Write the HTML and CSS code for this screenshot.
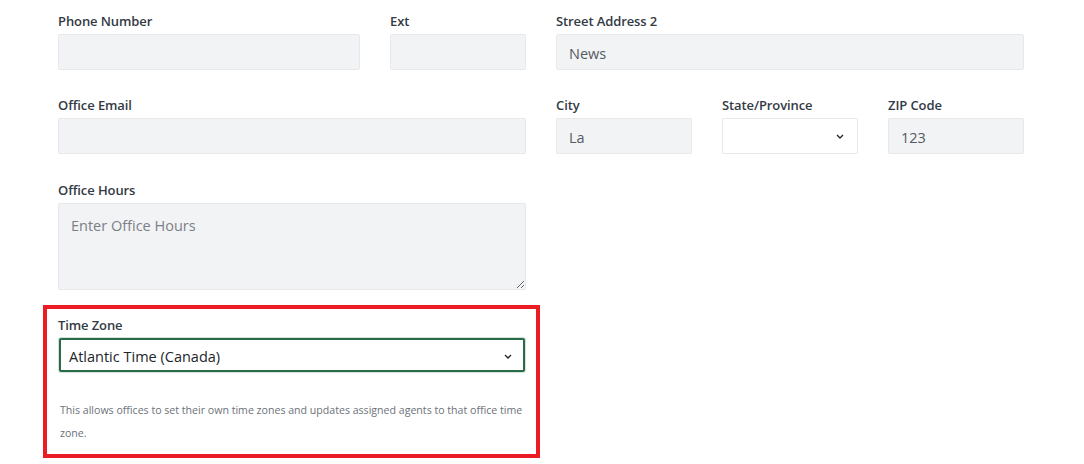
FILE: index.html
```html
<!DOCTYPE html>
<html lang="en">
<head>
<meta charset="utf-8">
<title>Office Details</title>
<link rel="stylesheet" href="styles.css">
</head>
<body>
<form class="form">
  <div class="grid">
    <div class="field span-2">
      <label class="label">Phone Number</label>
      <input class="input" type="text">
    </div>
    <div class="field span-1">
      <label class="label">Ext</label>
      <input class="input" type="text">
    </div>
    <div class="field span-3">
      <label class="label">Street Address 2</label>
      <input class="input" type="text" value="News">
    </div>

    <div class="field span-3">
      <label class="label">Office Email</label>
      <input class="input" type="text">
    </div>
    <div class="field span-1">
      <label class="label">City</label>
      <input class="input" type="text" value="La">
    </div>
    <div class="field span-1">
      <label class="label">State/Province</label>
      <div class="select select-light">
        <span class="select-value"></span>
        <svg class="chev" width="8" height="5" viewBox="0 0 8 5"><polyline points="1,1 4,4 7,1" fill="none" stroke="#222" stroke-width="1.3"/></svg>
      </div>
    </div>
    <div class="field span-1">
      <label class="label">ZIP Code</label>
      <input class="input" type="text" value="123">
    </div>

    <div class="field field-tall span-3">
      <label class="label">Office Hours</label>
      <textarea class="input textarea" placeholder="Enter Office Hours"></textarea>
    </div>
    <div class="span-3"></div>

    <div class="highlight span-3">
      <label class="label">Time Zone</label>
      <div class="select select-focus">
        <span class="select-value">Atlantic Time (Canada)</span>
        <svg class="chev" width="8" height="5" viewBox="0 0 8 5"><polyline points="1,1 4,4 7,1" fill="none" stroke="#222" stroke-width="1.3"/></svg>
      </div>
      <p class="help">This allows offices to set their own time zones and updates assigned agents to that office time zone.</p>
    </div>
  </div>
</form>
</body>
</html>
```
FILE: styles.css
```css
* { box-sizing: border-box; }
html, body { margin: 0; background: #fff; }
body {
  font-family: "Open Sans", "Noto Sans", Arial, sans-serif;
  color: #343a46;
}
.form {
  padding: 11px 0 0 58px;
  width: 1084px;
}
.grid {
  display: grid;
  grid-template-columns: repeat(6, 136px);
  column-gap: 30px;
  align-items: start;
}
.span-1 { grid-column: span 1; }
.span-2 { grid-column: span 2; }
.span-3 { grid-column: span 3; }
.field { margin-bottom: 25px; }
.label {
  display: block;
  font-size: 13px;
  font-weight: 600;
  line-height: 21px;
  margin-bottom: 2px;
  color: #333a45;
  letter-spacing: -0.1px;
}
.field-tall .label { margin-top: 1px; }
.input {
  display: block;
  width: 100%;
  height: 36px;
  margin: 0;
  padding: 2px 12px 0;
  border: 1px solid #e6e8eb;
  border-radius: 2px;
  background: #f2f3f5;
  font-family: inherit;
  font-size: 14.5px;
  color: #555a61;
  outline: none;
}
.textarea {
  height: 87px;
  padding: 11px 12px;
  resize: vertical;
  line-height: 22px;
}
.textarea::placeholder { color: #7b8088; }
.select {
  display: flex;
  align-items: center;
  justify-content: space-between;
  height: 36px;
  padding: 0 13px 0 10px;
  border-radius: 2px;
  background: #fff;
}
.select-light { border: 1px solid #e6e8eb; }
.select-focus {
  height: 34px;
  margin-left: 1px;
  border: 2px solid #2c6b4a;
  box-shadow: 0 0 0 1px #d3e3d9;
  padding: 2px 11px 0 8px;
}
.select-value {
  font-size: 14.5px;
  color: #212529;
}
.chev { display: block; }
.highlight {
  margin: -10px 0 0 -15px;
  width: 497px;
  border: 4px solid #ec1c24;
  padding: 6px 11px 9px 11px;
}
.help {
  margin: 27px 0 0 2px;
  font-size: 10.6px;
  line-height: 23px;
  color: #6c727a;
}
```
